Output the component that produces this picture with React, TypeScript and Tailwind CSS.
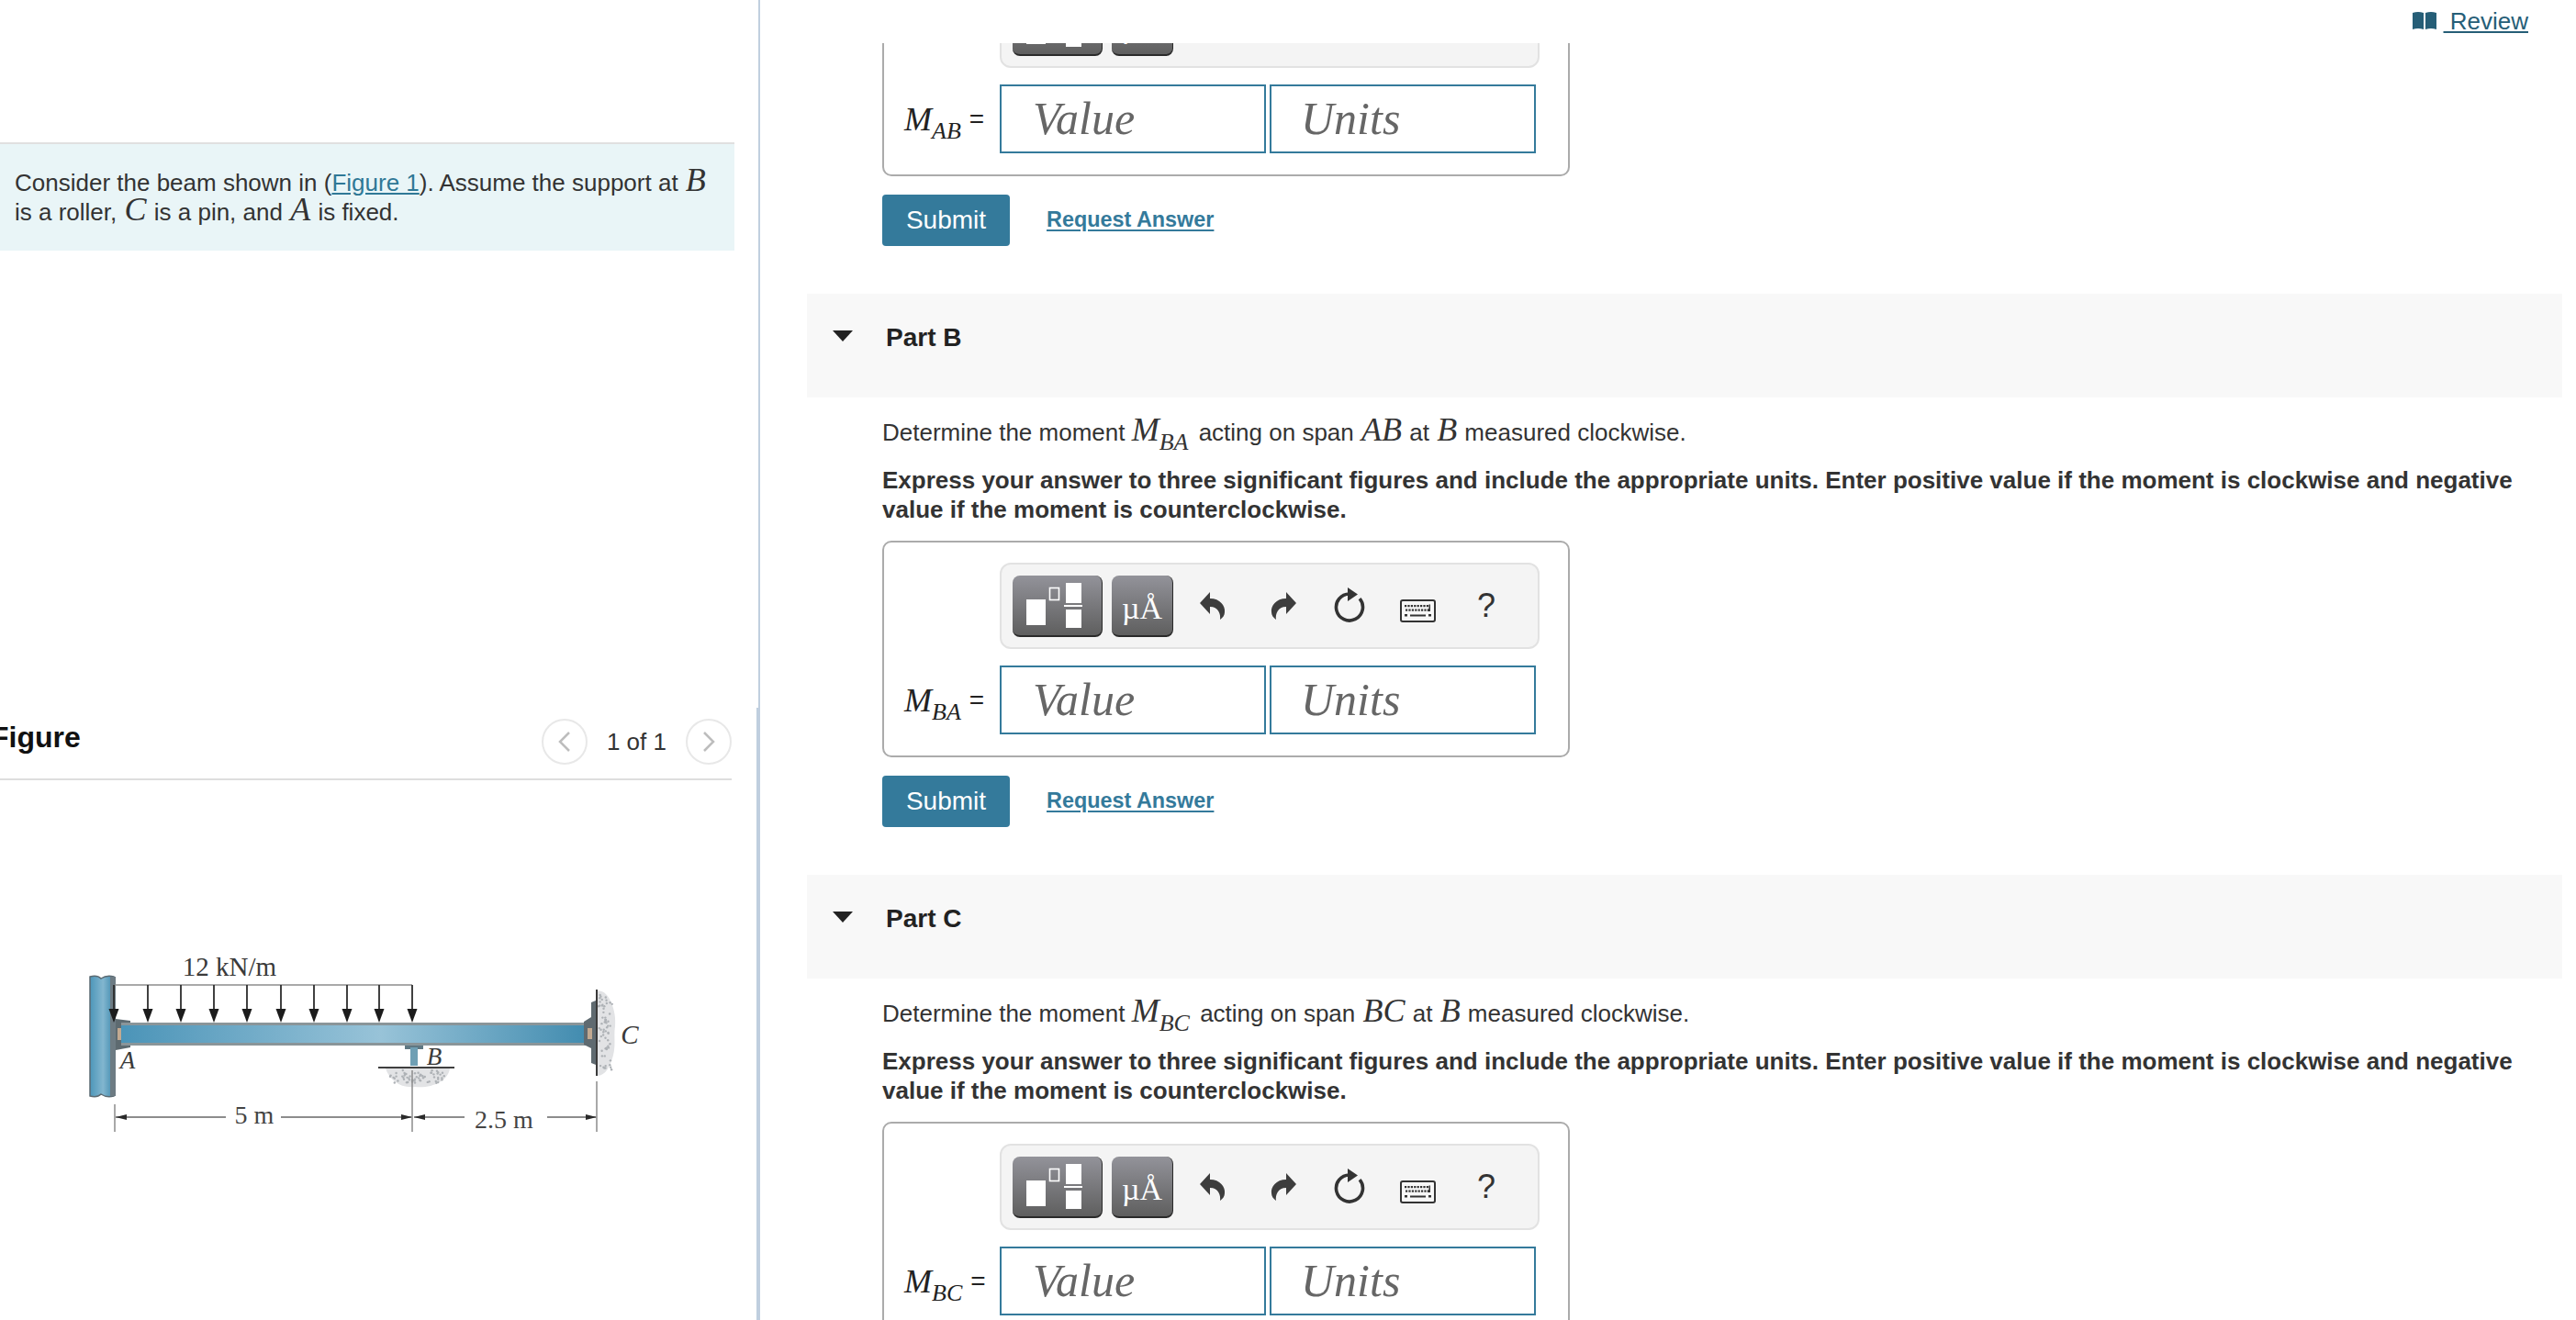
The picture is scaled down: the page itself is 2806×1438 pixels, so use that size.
import React from "react";

const serif = "font-['Liberation_Serif',serif]";

function V({ children }: { children: React.ReactNode }) {
  return <span className={`${serif} italic text-[36px] leading-[0] mx-[1px]`}>{children}</span>;
}

function MSub({ sub }: { sub: string }) {
  return (
    <span className={`${serif} italic leading-[0] text-[36px] mr-[4px]`}>
      M<sub className="text-[26px] leading-[0] align-[-3px]">{sub}</sub>
    </span>
  );
}

function Undo({ flip = false }: { flip?: boolean }) {
  return (
    <svg width="28" height="31" viewBox="0 0 28 31" className={flip ? "-scale-x-100" : ""}>
      <path d="M0 12 L11 0 L11 7 C22 7 28 15 27 22 C27 25 25 28 22 30 C23 24 20 16 11 16 L11 24 Z" fill="#3d3d3d" />
    </svg>
  );
}

function Reset() {
  return (
    <svg width="34" height="38" viewBox="0 0 34 38">
      <path d="M17 7 A14.5 14.5 0 1 0 28.1 12.2" fill="none" stroke="#333" strokeWidth="3.6" />
      <path d="M15 0 L26 7.5 L15 15 Z" fill="#333" />
    </svg>
  );
}

function Keyboard() {
  const keys: React.ReactNode[] = [];
  for (let r = 0; r < 2; r++) {
    for (let i = 0; i < 8; i++) {
      keys.push(<rect key={`${r}-${i}`} x={5 + i * 3.4 + r} y={6 + r * 4.5} width="2.2" height="2.2" fill="#333" />);
    }
  }
  return (
    <svg width="39" height="25" viewBox="0 0 39 25">
      <rect x="1" y="1" width="37" height="23" rx="2" fill="#f7f7f7" stroke="#333" strokeWidth="2" />
      {keys}
      <path d="M33 5.5 V13 H30 V10.5 H31.5 V5.5 Z" fill="#333" />
      <rect x="5" y="16" width="3" height="2.5" fill="#333" />
      <rect x="11" y="16.5" width="17" height="2" fill="#333" />
      <rect x="31" y="16" width="3" height="2.5" fill="#333" />
    </svg>
  );
}

function TemplateGlyph() {
  return (
    <svg width="98" height="67" viewBox="0 0 98 67">
      <rect x="15" y="26" width="21" height="28" fill="#fff" />
      <rect x="40.5" y="13.5" width="10" height="13" fill="none" stroke="#fff" strokeWidth="1.6" />
      <rect x="58" y="8" width="17" height="22" fill="#fff" />
      <rect x="56" y="32" width="20" height="2" fill="#fff" />
      <rect x="58" y="37" width="17" height="20" fill="#fff" />
    </svg>
  );
}

function AnswerBox({ sub }: { sub: string }) {
  return (
    <div className="w-[749px] h-[236px] border-2 border-[#ababab] rounded-[10px] bg-white flex flex-col pt-[22px] pl-[126px]">
      <div className="w-[588px] h-[94px] bg-[#f4f4f4] border-2 border-[#e2e2e2] rounded-[12px] flex items-center pl-[12px]">
        <div className="w-[98px] h-[67px] rounded-[8px] bg-gradient-to-b from-[#93939a] to-[#5f5f5f] border-b-2 border-r border-[#2a2a2a]">
          <TemplateGlyph />
        </div>
        <div className={`w-[67px] h-[67px] ml-[10px] rounded-[8px] bg-gradient-to-b from-[#93939a] to-[#5f5f5f] border-b-2 border-r border-[#2a2a2a] flex items-center justify-center text-white text-[34px] pt-[6px] ${serif}`}>
          µÅ
        </div>
        <div className="ml-[29px]"><Undo /></div>
        <div className="ml-[49px]"><Undo flip /></div>
        <div className="ml-[41px] mt-[-2px]"><Reset /></div>
        <div className="ml-[38px] mt-[10px]"><Keyboard /></div>
        <div className="ml-[45px] text-[#333] text-[36px] leading-none">?</div>
      </div>
      <div className="flex items-center mt-[18px] -ml-[104px]">
        <div className="w-[104px] text-[#222] flex items-center">
          <span className={`${serif} italic text-[36px] leading-none`}>
            M<sub className="text-[26px] leading-[0] align-[-3px]">{sub}</sub>
          </span>
          <span className="text-[28px] ml-[9px] leading-none">=</span>
        </div>
        <div className={`w-[290px] h-[75px] border-2 border-[#347a9b] pl-[34px] flex items-center text-[50px] italic text-[#666] ${serif}`}>Value</div>
        <div className={`w-[290px] h-[75px] ml-[4px] border-2 border-[#347a9b] pl-[32px] flex items-center text-[50px] italic text-[#666] ${serif}`}>Units</div>
      </div>
    </div>
  );
}

function Actions() {
  return (
    <div className="flex items-center mt-[20px]">
      <div className="w-[139px] h-[56px] bg-[#347a9b] rounded-[4px] text-white text-[28px] flex items-center justify-center">Submit</div>
      <a className="ml-[40px] text-[23.4px] font-bold text-[#347a9b] underline underline-offset-[3px] leading-none">Request Answer</a>
    </div>
  );
}

function Part({ letter, prompt }: { letter: string; prompt: React.ReactNode }) {
  return (
    <section className="mt-[52px] mb-[2px]">
      <div className="ml-[51px] w-[1912px] h-[113px] bg-[#f8f8f8] flex items-start pt-[40px]">
        <div className="ml-[28px] w-0 h-0 border-l-[11px] border-r-[11px] border-t-[12px] border-l-transparent border-r-transparent border-t-[#222]" />
        <div className="ml-[36px] text-[28px] font-bold text-[#222] leading-[14px] mt-[1px]">Part {letter}</div>
      </div>
      <div className="ml-[133px] mt-[18px] w-[1790px] text-[26px] text-[#333]">
        <p className="leading-[40px] h-[40px]">{prompt}</p>
        <p className="font-bold leading-[32px] mt-[16px]">
          Express your answer to three significant figures and include the appropriate units. Enter positive value if the moment is clockwise and negative value if the moment is counterclockwise.
        </p>
      </div>
      <div className="ml-[133px] mt-[18px]">
        <AnswerBox sub={letter === "B" ? "BA" : "BC"} />
        <Actions />
      </div>
    </section>
  );
}

function Speckle({ x, y, w, h, seed }: { x: number; y: number; w: number; h: number; seed: number }) {
  const dots: React.ReactNode[] = [];
  let s = seed;
  for (let i = 0; i < 60; i++) {
    s = (s * 7919 + 13) % 10007;
    const dx = x + (s % 100) / 100 * w;
    s = (s * 7919 + 13) % 10007;
    const dy = y + (s % 100) / 100 * h;
    dots.push(<circle key={i} cx={dx} cy={dy} r="1.2" fill="#aeb2b6" />);
  }
  return <g>{dots}</g>;
}

function BeamFigure() {
  const arrows = [124, 161, 197, 233, 269, 306, 342, 378, 413, 449];
  return (
    <svg width="797" height="230" viewBox="0 1030 797 230" className="block">
      <defs>
        <linearGradient id="beam" x1="0" x2="1" y1="0" y2="0">
          <stop offset="0" stopColor="#4b94b8" />
          <stop offset="0.55" stopColor="#98c3d8" />
          <stop offset="1" stopColor="#3f8aae" />
        </linearGradient>
        <linearGradient id="wall" x1="0" x2="1" y1="0" y2="0">
          <stop offset="0" stopColor="#4d96b9" />
          <stop offset="0.55" stopColor="#82b6cf" />
          <stop offset="1" stopColor="#3f8aae" />
        </linearGradient>
      </defs>
      <path d="M98 1064 Q106 1062 110 1066 Q116 1062 124 1064 L124 1194 Q116 1196 110 1192 Q106 1196 98 1194 Z" fill="url(#wall)" stroke="#5b6a72" strokeWidth="1.5" />
      <rect x="120" y="1064" width="6" height="130" fill="#6d7b83" />
      <path d="M126 1110 L142 1112 L142 1116 L132 1118 L132 1134 L142 1137 L142 1141 L126 1144 Z" fill="#5d6a70" />
      <rect x="128" y="1120" width="4" height="13" fill="#c2a991" />
      <rect x="132" y="1114" width="516" height="25" fill="#8a9599" />
      <rect x="132" y="1117" width="514" height="19" fill="url(#beam)" />
      <path d="M125 1073 H449" stroke="#8d8d8d" strokeWidth="1.6" />
      {arrows.map((x) => (
        <g key={x}>
          <path d={`M${x} 1073 V1100`} stroke="#2c2c2c" strokeWidth="1.8" />
          <path d={`M${x - 5.5} 1099 H${x + 5.5} L${x} 1114 Z`} fill="#1c1c1c" />
        </g>
      ))}
      <text x="250" y="1063" textAnchor="middle" fontFamily="Liberation Serif" fontSize="29" fill="#3a3a3a">12 kN/m</text>
      <text x="139" y="1164" textAnchor="middle" fontFamily="Liberation Serif" fontStyle="italic" fontSize="27" fill="#3a3a3a">A</text>
      <text x="473" y="1160" textAnchor="middle" fontFamily="Liberation Serif" fontStyle="italic" fontSize="27" fill="#3a3a3a">B</text>
      <text x="686" y="1137" textAnchor="middle" fontFamily="Liberation Serif" fontStyle="italic" fontSize="29" fill="#3a3a3a">C</text>
      {/* roller support */}
      <path d="M420 1164 H490 C488 1178 470 1186 452 1184 C436 1186 424 1176 420 1164 Z" fill="#e2e3e5" />
      <Speckle x={425} y={1166} w={60} h={14} seed={17} />
      <rect x="441" y="1139" width="20" height="4" fill="#5f7883" />
      <rect x="447" y="1141" width="8" height="20" fill="#6f9fb4" />
      <path d="M412 1163 H495" stroke="#3f3f3f" strokeWidth="2" />
      <path d="M449 1166 V1233" stroke="#8b8b8b" strokeWidth="1.5" />
      {/* right support */}
      <path d="M650 1080 C662 1076 672 1100 670 1118 C668 1130 672 1140 666 1156 C662 1168 656 1172 650 1172 Z" fill="#e2e3e5" />
      <Speckle x={652} y={1084} w={15} h={82} seed={41} />
      <path d="M650 1078 V1172" stroke="#3a3a3a" strokeWidth="2" />
      <path d="M636 1113 L644 1108 L644 1092 L649 1090 L649 1160 L644 1158 L644 1142 L636 1138 Z" fill="#5f6a70" />
      <rect x="640" y="1120" width="5" height="12" fill="#c2a991" />
      {/* dimensions */}
      <path d="M125 1203 V1233" stroke="#8b8b8b" strokeWidth="1.5" />
      <path d="M650 1178 V1233" stroke="#8b8b8b" strokeWidth="1.5" />
      <path d="M126 1217 H246 M306 1217 H448 M451 1217 H506 M596 1217 H649" stroke="#8c8c8c" strokeWidth="2" />
      <path d="M126 1217 L138 1214 V1220 Z M449 1217 L437 1214 V1220 Z M451 1217 L463 1214 V1220 Z M650 1217 L638 1214 V1220 Z" fill="#2a2a2a" />
      <text x="277" y="1224" textAnchor="middle" fontFamily="Liberation Serif" fontSize="28" fill="#444">5 m</text>
      <text x="549" y="1229" textAnchor="middle" fontFamily="Liberation Serif" fontSize="28" fill="#444">2.5 m</text>
    </svg>
  );
}

function Chevron({ right = false }: { right?: boolean }) {
  return (
    <div className="w-[50px] h-[50px] rounded-full border-2 border-[#e8e8e8] flex items-center justify-center">
      <svg width="16" height="24" viewBox="0 0 16 24">
        <path d={right ? "M3 2 L13 12 L3 22" : "M13 2 L3 12 L13 22"} fill="none" stroke="#bdbdbd" strokeWidth="2.5" />
      </svg>
    </div>
  );
}

export default function App() {
  return (
    <div className="w-[2806px] h-[1438px] flex overflow-hidden bg-white font-['Liberation_Sans',sans-serif]">
      <aside className="w-[824px] shrink-0 flex flex-col pt-[155px]">
        <div className="w-[800px] h-[118px] bg-[#e9f5f7] border-t-2 border-[#e0e0e0] pl-[16px] pr-[10px] pt-[26px] text-[26px] leading-[32px] text-[#333]">
          Consider the beam shown in (<a className="text-[#2f7896] underline">Figure 1</a>). Assume the support at <V>B</V>
          <br />
          is a roller, <V>C</V> is a pin, and <V>A</V> is fixed.
        </div>
        <div className="w-[797px] mt-[509px] h-[68px] border-b-2 border-[#dedede] flex items-start">
          <div className="-ml-[10px] text-[32px] leading-[38px] font-bold text-[#111] mt-[2px]">Figure</div>
          <div className="ml-auto flex items-center mt-[1px]">
            <Chevron />
            <span className="mx-[21px] text-[26px] text-[#333]">1 of 1</span>
            <Chevron right />
          </div>
        </div>
        <div className="mt-[180px]">
          <BeamFigure />
        </div>
      </aside>
      <div className="w-[4px] shrink-0 flex flex-col items-end">
        <div className="h-[771px] w-[2px] bg-[#c0cfdf]" />
        <div className="flex-1 w-[4px] bg-[#c0cfdf]" />
      </div>
      <main className="flex-1 min-w-0 flex flex-col">
        <header className="h-[47px] shrink-0 flex justify-end items-start pr-[52px] pt-[7px] text-[26px] leading-[32px] text-[#265e77]">
          <svg width="26" height="21" viewBox="0 0 26 21" className="mt-[5px]">
            <path d="M0 2 Q6 0 12 2 V20 Q6 18 0 20 Z M14 2 Q20 0 26 2 V20 Q20 18 14 20 Z" fill="#265e77" />
          </svg>
          <a className="underline ml-[8px] whitespace-pre">{" Review"}</a>
        </header>
        <div className="flex-1 overflow-hidden">
          <div className="-mt-[91px] ml-[133px]">
            <AnswerBox sub="AB" />
            <Actions />
          </div>
          <Part letter="B" prompt={<>Determine the moment <MSub sub="BA" /> acting on span <V>AB</V> at <V>B</V> measured clockwise.</>} />
          <Part letter="C" prompt={<>Determine the moment <MSub sub="BC" /> acting on span <V>BC</V> at <V>B</V> measured clockwise.</>} />
        </div>
      </main>
    </div>
  );
}
